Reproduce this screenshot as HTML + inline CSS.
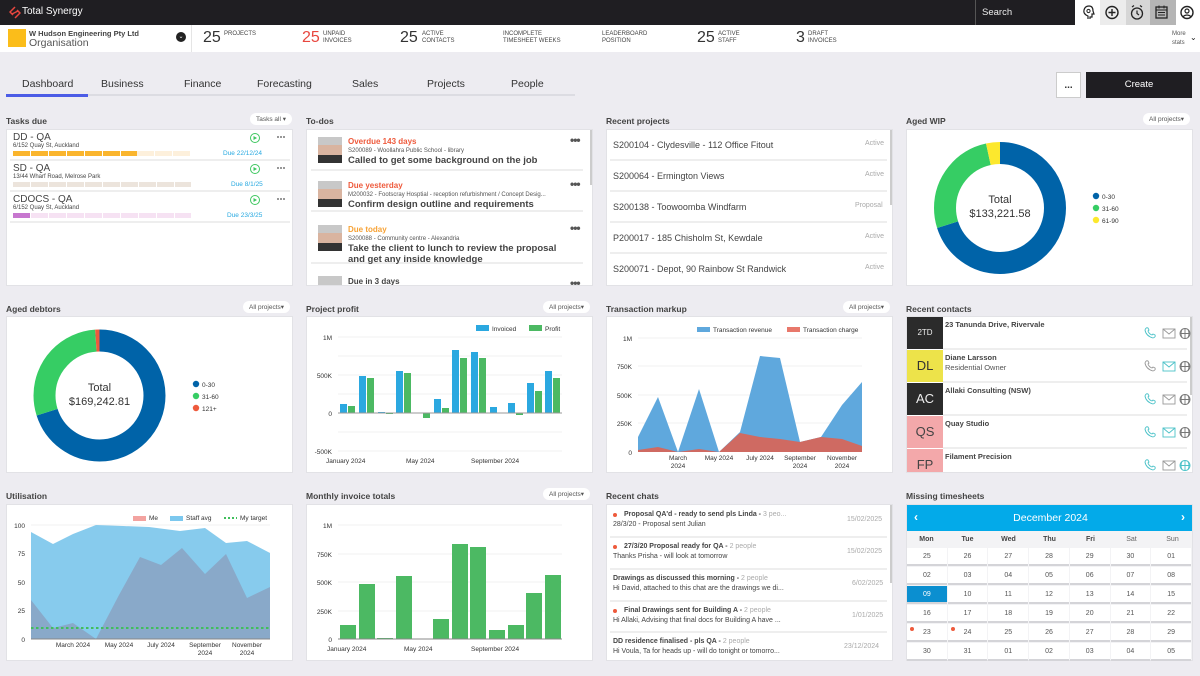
<!DOCTYPE html>
<html><head><meta charset="utf-8">
<style>
*{box-sizing:border-box;margin:0;padding:0}
body{width:1200px;height:676px;background:#edecf1;font-family:"Liberation Sans",sans-serif;color:#333;position:relative;overflow:hidden}
.a{position:absolute}
.top{left:0;top:0;width:1200px;height:25px;background:#1f1e22}
.stats{left:0;top:25px;width:1200px;height:27px;background:#fff}
.num{font-size:16px;color:#333;top:29px}
.lbl{font-size:6px;line-height:7px;color:#444;top:31px}
.tab{top:78px;font-size:10.5px;color:#333}
.card{background:#fff;border:1px solid #e2e2e6}
.ttl{font-size:8.5px;font-weight:bold;color:#444}
.pill{background:#fff;border-radius:8px;font-size:6.5px;color:#555;padding:2px 6px;height:12px}
.dots{font-size:12px;font-weight:bold;color:#555;letter-spacing:-1px}
.row{border-bottom:2px solid #eee}
svg text{font-family:"Liberation Sans",sans-serif}
.c{background:#fff;margin:0 1px 1px 0;border-bottom:2px solid #d4d4d8}
.dot{position:absolute;left:3px;top:3px;width:4px;height:4px;border-radius:2px;background:#ee5a3c}
</style></head><body>
<div class="a top"></div>
<svg class="a" style="left:9px;top:6px" width="12" height="13" viewBox="0 0 12 13"><path d="M6 1 L1 6 L4 9 M6 12 L11 7 L8 4 M3 8 L9 5" stroke="#e8473f" stroke-width="1.5" fill="none"/></svg>
<div class="a" style="left:22px;top:6px;color:#fff;font-size:10px">Total Synergy</div>
<div class="a" style="left:975px;top:0;width:1px;height:25px;background:#555"></div>
<div class="a" style="left:982px;top:7px;color:#eee;font-size:9.5px">Search</div>
<div class="a" style="left:1075px;top:0;width:25px;height:25px;background:#fff"></div>
<div class="a" style="left:1100px;top:0;width:26px;height:25px;background:#ececec"></div>
<div class="a" style="left:1126px;top:0;width:24px;height:25px;background:#d6d6d6"></div>
<div class="a" style="left:1150px;top:0;width:26px;height:25px;background:#b5b5b5"></div>
<div class="a" style="left:1176px;top:0;width:24px;height:25px;background:#fff"></div>
<svg class="a" style="left:1080px;top:4px" width="120" height="17" viewBox="0 0 120 17">
<path d="M8 15 V12 Q3 10 4 6 Q5 2 9 2 Q13 2 13 7 L14 10 H12 V13 H10 V15" fill="none" stroke="#222" stroke-width="1.2"/><circle cx="8.5" cy="7" r="1.6" fill="none" stroke="#222"/>
<circle cx="32" cy="8.5" r="6" fill="none" stroke="#222" stroke-width="1.4"/><path d="M32 5v7M28.5 8.5h7" stroke="#222" stroke-width="1.4"/>
<circle cx="57" cy="9.5" r="5.5" fill="none" stroke="#222" stroke-width="1.3"/><path d="M57 6.5v3l2 1.5M52 3l2-1.5M62 3l-2-1.5" stroke="#222" stroke-width="1.2" fill="none"/>
<rect x="76" y="3" width="11" height="11" fill="none" stroke="#222" stroke-width="1.3"/><path d="M76 6h11M79 1.5v3M84 1.5v3M78 8.5h7M78 11h7" stroke="#222"/>
<circle cx="107" cy="8.5" r="6" fill="none" stroke="#222" stroke-width="1.4"/><circle cx="107" cy="7" r="2" fill="none" stroke="#222" stroke-width="1.2"/><path d="M103 12.5q4-3 8 0" stroke="#222" fill="none" stroke-width="1.2"/>
</svg>
<div class="a stats"></div>
<div class="a" style="left:8px;top:29px;width:18px;height:18px;background:#fbbd1a"></div>
<div class="a" style="left:29px;top:29px;font-size:7.5px;font-weight:bold;color:#444">W Hudson Engineering Pty Ltd</div>
<div class="a" style="left:29px;top:37px;font-size:10.5px;color:#555">Organisation</div>
<div class="a" style="left:176px;top:32px;width:10px;height:10px;border-radius:5px;background:#222;color:#fff;font-size:6px;text-align:center;line-height:10px">⌄</div>
<div class="a" style="left:191px;top:25px;width:1px;height:27px;background:#e5e5e5"></div>
<div class="a num" style="left:203px">25</div><div class="a lbl" style="left:224px">PROJECTS</div>
<div class="a num" style="left:302px;color:#e8473f">25</div><div class="a lbl" style="left:323px">UNPAID<br>INVOICES</div>
<div class="a num" style="left:400px">25</div><div class="a lbl" style="left:422px">ACTIVE<br>CONTACTS</div>
<div class="a lbl" style="left:503px">INCOMPLETE<br>TIMESHEET WEEKS</div>
<div class="a lbl" style="left:602px">LEADERBOARD<br>POSITION</div>
<div class="a num" style="left:697px">25</div><div class="a lbl" style="left:718px">ACTIVE<br>STAFF</div>
<div class="a num" style="left:796px">3</div><div class="a lbl" style="left:808px">DRAFT<br>INVOICES</div>
<div class="a" style="left:1172px;top:30px;font-size:6px;line-height:9px;color:#555">More<br>stats</div>
<div class="a" style="left:1190px;top:33px;font-size:8px;color:#222">⌄</div>
<div class="a tab" style="left:22px">Dashboard</div>
<div class="a tab" style="left:101px">Business</div>
<div class="a tab" style="left:184px">Finance</div>
<div class="a tab" style="left:257px">Forecasting</div>
<div class="a tab" style="left:352px">Sales</div>
<div class="a tab" style="left:427px">Projects</div>
<div class="a tab" style="left:511px">People</div>
<div class="a" style="left:6px;top:94px;width:569px;height:2px;background:#dcdce2"></div>
<div class="a" style="left:6px;top:94px;width:82px;height:3px;background:#4c5ce6"></div>
<div class="a" style="left:1056px;top:72px;width:25px;height:26px;background:#fff;border:1px solid #ccc;font-size:10px;font-weight:bold;text-align:center;line-height:26px">...</div>
<div class="a" style="left:1086px;top:72px;width:106px;height:26px;background:#1f1e22;color:#fff;font-size:9.5px;text-align:center;line-height:26px">Create</div>

<div class="a ttl" style="left:6px;top:116px">Tasks due</div>
<div class="a pill" style="left:250px;top:113px">Tasks all ▾</div>
<div class="a ttl" style="left:306px;top:116px">To-dos</div>
<div class="a ttl" style="left:606px;top:116px">Recent projects</div>
<div class="a ttl" style="left:906px;top:116px">Aged WIP</div>
<div class="a pill" style="left:1143px;top:113px">All projects▾</div>

<div class="a card" style="left:6px;top:129px;width:287px;height:157px"></div>
<div class="a" style="left:10px;top:131px;width:280px;height:150px">
 <div class="a row" style="left:0;top:0;width:280px;height:30px"></div>
 <div class="a row" style="left:0;top:31px;width:280px;height:30px"></div>
 <div class="a row" style="left:0;top:62px;width:280px;height:30px"></div>
</div>
<div class="a" style="left:13px;top:132px;font-size:10px;color:#444">DD - QA</div>
<div class="a" style="left:13px;top:143px;font-size:6px;color:#444">6/152 Quay St, Auckland</div>
<div class="a" style="left:13px;top:151px;width:178px;height:5px;background:repeating-linear-gradient(90deg,#fab52d 0 17px,#fff 17px 18px)"></div>
<div class="a" style="left:137px;top:151px;width:54px;height:5px;background:repeating-linear-gradient(90deg,#fdf0dc 0 17px,#fff 17px 18px)"></div>
<div class="a" style="left:223px;top:150px;font-size:6.5px;color:#27a9e1">Due 22/12/24</div>
<div class="a" style="left:13px;top:163px;font-size:10px;color:#444">SD - QA</div>
<div class="a" style="left:13px;top:174px;font-size:6px;color:#444">13/44 Wharf Road, Melrose Park</div>
<div class="a" style="left:13px;top:182px;width:178px;height:5px;background:repeating-linear-gradient(90deg,#ece4dc 0 17px,#fff 17px 18px)"></div>
<div class="a" style="left:231px;top:181px;font-size:6.5px;color:#27a9e1">Due 8/1/25</div>
<div class="a" style="left:13px;top:194px;font-size:10px;color:#444">CDOCS - QA</div>
<div class="a" style="left:13px;top:205px;font-size:6px;color:#444">6/152 Quay St, Auckland</div>
<div class="a" style="left:13px;top:213px;width:178px;height:5px;background:repeating-linear-gradient(90deg,#f6e2f3 0 17px,#fff 17px 18px)"></div>
<div class="a" style="left:13px;top:213px;width:17px;height:5px;background:#c777cf"></div>
<div class="a" style="left:227px;top:212px;font-size:6.5px;color:#27a9e1">Due 23/3/25</div>
<svg class="a" style="left:248px;top:132px" width="40" height="90" viewBox="0 0 40 90">
<g fill="none" stroke="#3fc760" stroke-width="1"><circle cx="7" cy="6" r="4.5"/><circle cx="7" cy="37" r="4.5"/><circle cx="7" cy="68" r="4.5"/></g>
<g fill="#3fc760"><path d="M5.5 4v4l3.5-2z"/><path d="M5.5 35v4l3.5-2z"/><path d="M5.5 66v4l3.5-2z"/></g>
<g fill="#777"><circle cx="30" cy="5" r="1"/><circle cx="33" cy="5" r="1"/><circle cx="36" cy="5" r="1"/><circle cx="30" cy="36" r="1"/><circle cx="33" cy="36" r="1"/><circle cx="36" cy="36" r="1"/><circle cx="30" cy="67" r="1"/><circle cx="33" cy="67" r="1"/><circle cx="36" cy="67" r="1"/></g>
</svg>

<div class="a card" style="left:306px;top:129px;width:287px;height:157px;overflow:hidden">
 <div class="a" style="left:4px;top:2px;width:272px;height:39px;border-bottom:2px solid #eee"></div>
 <div class="a" style="left:4px;top:43px;width:272px;height:39px;border-bottom:2px solid #eee"></div>
 <div class="a" style="left:4px;top:84px;width:272px;height:50px;border-bottom:2px solid #eee"></div>
 <div class="a" style="left:283px;top:0;width:3px;height:55px;background:#ccc"></div>
 <div class="a" style="left:11px;top:7px;width:24px;height:26px;background:linear-gradient(180deg,#c8c8c8 0 30%,#d9b4a0 30% 70%,#333 70%)"></div>
 <div class="a" style="left:11px;top:51px;width:24px;height:26px;background:linear-gradient(180deg,#c8c8c8 0 30%,#d9b4a0 30% 70%,#333 70%)"></div>
 <div class="a" style="left:11px;top:95px;width:24px;height:26px;background:linear-gradient(180deg,#c8c8c8 0 30%,#d9b4a0 30% 70%,#333 70%)"></div>
 <div class="a" style="left:11px;top:146px;width:24px;height:12px;background:#c8c8c8"></div>
 <div class="a" style="left:41px;top:7px;font-size:8px;font-weight:bold;color:#ee5a3c">Overdue 143 days</div>
 <div class="a" style="left:41px;top:18px;font-size:6px;color:#555">S200089 - Woollahra Public School - library</div>
 <div class="a" style="left:41px;top:25px;font-size:9.5px;font-weight:bold;color:#444">Called to get some background on the job</div>
 <div class="a" style="left:41px;top:51px;font-size:8px;font-weight:bold;color:#ee5a3c">Due yesterday</div>
 <div class="a" style="left:41px;top:62px;font-size:6px;color:#555">M200032 - Footscray Hosptial - reception refurbishment / Concept Desig...</div>
 <div class="a" style="left:41px;top:69px;font-size:9.5px;font-weight:bold;color:#444">Confirm design outline and requirements</div>
 <div class="a" style="left:41px;top:95px;font-size:8px;font-weight:bold;color:#f7a235">Due today</div>
 <div class="a" style="left:41px;top:106px;font-size:6px;color:#555">S200088 - Community centre - Alexandria</div>
 <div class="a" style="left:41px;top:113px;font-size:9.5px;font-weight:bold;color:#444;line-height:11px">Take the client to lunch to review the proposal<br>and get any inside knowledge</div>
 <div class="a" style="left:41px;top:147px;font-size:8px;font-weight:bold;color:#444">Due in 3 days</div>
 <div class="a dots" style="left:263px;top:3px">•••</div>
 <div class="a dots" style="left:263px;top:47px">•••</div>
 <div class="a dots" style="left:263px;top:91px">•••</div>
 <div class="a dots" style="left:263px;top:146px">•••</div>
</div>

<div class="a card" style="left:606px;top:129px;width:287px;height:157px;overflow:hidden">
 <div class="a" style="left:3px;top:0;width:277px;height:31px;border-bottom:2px solid #eee"></div>
 <div class="a" style="left:3px;top:31px;width:277px;height:31px;border-bottom:2px solid #eee"></div>
 <div class="a" style="left:3px;top:62px;width:277px;height:31px;border-bottom:2px solid #eee"></div>
 <div class="a" style="left:3px;top:93px;width:277px;height:31px;border-bottom:2px solid #eee"></div>
 <div class="a" style="left:283px;top:0;width:3px;height:75px;background:#ccc"></div>
 <div class="a" style="left:6px;top:10px;font-size:9px;color:#444">S200104 - Clydesville - 112 Office Fitout</div>
 <div class="a" style="left:6px;top:41px;font-size:9px;color:#444">S200064 - Ermington Views</div>
 <div class="a" style="left:6px;top:72px;font-size:9px;color:#444">S200138 - Toowoomba Windfarm</div>
 <div class="a" style="left:6px;top:103px;font-size:9px;color:#444">P200017 - 185 Chisholm St, Kewdale</div>
 <div class="a" style="left:6px;top:134px;font-size:9px;color:#444">S200071 - Depot, 90 Rainbow St Randwick</div>
 <div class="a" style="left:258px;top:10px;font-size:7px;color:#aaa">Active</div>
 <div class="a" style="left:258px;top:41px;font-size:7px;color:#aaa">Active</div>
 <div class="a" style="left:248px;top:72px;font-size:7px;color:#aaa">Proposal</div>
 <div class="a" style="left:258px;top:103px;font-size:7px;color:#aaa">Active</div>
 <div class="a" style="left:258px;top:134px;font-size:7px;color:#aaa">Active</div>
</div>

<div class="a card" style="left:906px;top:129px;width:287px;height:157px"></div>
<svg class="a" style="left:906px;top:129px" width="287" height="157">
<g transform="rotate(-90 94 79)">
<circle cx="94" cy="79" r="55" fill="none" stroke="#0063a8" stroke-width="22" stroke-dasharray="242 104" />
<circle cx="94" cy="79" r="55" fill="none" stroke="#36cd64" stroke-width="22" stroke-dasharray="0 242 91.5 100" />
<circle cx="94" cy="79" r="55" fill="none" stroke="#fce82d" stroke-width="22" stroke-dasharray="0 333.5 12 10" />
</g>
<text x="94" y="74" font-size="11" text-anchor="middle" fill="#333">Total</text>
<text x="94" y="88" font-size="11" text-anchor="middle" fill="#333">$133,221.58</text>
<circle cx="190" cy="67" r="3.2" fill="#0063a8"/><text x="196" y="70" font-size="6.5" fill="#333">0-30</text>
<circle cx="190" cy="79" r="3.2" fill="#36cd64"/><text x="196" y="82" font-size="6.5" fill="#333">31-60</text>
<circle cx="190" cy="91" r="3.2" fill="#fce82d"/><text x="196" y="94" font-size="6.5" fill="#333">61-90</text>
</svg>

<div class="a ttl" style="left:6px;top:304px">Aged debtors</div>
<div class="a pill" style="left:243px;top:301px">All projects▾</div>
<div class="a ttl" style="left:306px;top:304px">Project profit</div>
<div class="a pill" style="left:543px;top:301px">All projects▾</div>
<div class="a ttl" style="left:606px;top:304px">Transaction markup</div>
<div class="a pill" style="left:843px;top:301px">All projects▾</div>
<div class="a ttl" style="left:906px;top:304px">Recent contacts</div>

<div class="a card" style="left:6px;top:316px;width:287px;height:157px"></div>
<svg class="a" style="left:6px;top:316px" width="287" height="157">
<g transform="rotate(-90 93.5 79.5)">
<circle cx="93.5" cy="79.5" r="55" fill="none" stroke="#0063a8" stroke-width="22" stroke-dasharray="242 104"/>
<circle cx="93.5" cy="79.5" r="55" fill="none" stroke="#36cd64" stroke-width="22" stroke-dasharray="0 242 99.5 10"/>
<circle cx="93.5" cy="79.5" r="55" fill="none" stroke="#ee5a3c" stroke-width="22" stroke-dasharray="0 341.5 4 10"/>
</g>
<text x="93.5" y="75" font-size="11" text-anchor="middle" fill="#333">Total</text>
<text x="93.5" y="89" font-size="11" text-anchor="middle" fill="#333">$169,242.81</text>
<circle cx="190" cy="68" r="3.2" fill="#0063a8"/><text x="196" y="71" font-size="6.5" fill="#333">0-30</text>
<circle cx="190" cy="80" r="3.2" fill="#36cd64"/><text x="196" y="83" font-size="6.5" fill="#333">31-60</text>
<circle cx="190" cy="92" r="3.2" fill="#ee5a3c"/><text x="196" y="95" font-size="6.5" fill="#333">121+</text>
</svg>

<div class="a card" style="left:306px;top:316px;width:287px;height:157px"></div>
<div class="a card" style="left:606px;top:316px;width:287px;height:157px"></div>
<svg class="a" style="left:0;top:0" width="1200" height="676">
<g font-size="6.5" fill="#333">
<rect x="476" y="325" width="13" height="6" fill="#2ba8e0"/><text x="492" y="331">Invoiced</text>
<rect x="529" y="325" width="13" height="6" fill="#4cb963"/><text x="545" y="331">Profit</text>
<g stroke="#f0f0f0"><line x1="338" y1="337" x2="562" y2="337"/><line x1="338" y1="356" x2="562" y2="356"/><line x1="338" y1="375" x2="562" y2="375"/><line x1="338" y1="394" x2="562" y2="394"/><line x1="338" y1="432" x2="562" y2="432"/><line x1="338" y1="451" x2="562" y2="451"/></g>
<text x="332" y="340" text-anchor="end">1M</text><text x="332" y="378" text-anchor="end">500K</text><text x="332" y="416" text-anchor="end">0</text><text x="332" y="454" text-anchor="end">-500K</text>
<g fill="#2ba8e0">
<rect x="340" y="404" width="7" height="9"/><rect x="359" y="376" width="7" height="37"/><rect x="378" y="412" width="7" height="1"/><rect x="396" y="371" width="7" height="42"/><rect x="434" y="399" width="7" height="14"/><rect x="452" y="350" width="7" height="63"/><rect x="471" y="352" width="7" height="61"/><rect x="490" y="407" width="7" height="6"/><rect x="508" y="403" width="7" height="10"/><rect x="527" y="383" width="7" height="30"/><rect x="545" y="371" width="7" height="42"/>
</g>
<g fill="#4cb963">
<rect x="348" y="406" width="7" height="7"/><rect x="367" y="378" width="7" height="35"/><rect x="386" y="413" width="7" height="1"/><rect x="404" y="373" width="7" height="40"/><rect x="423" y="413" width="7" height="5"/><rect x="442" y="408" width="7" height="5"/><rect x="460" y="358" width="7" height="55"/><rect x="479" y="358" width="7" height="55"/><rect x="516" y="413" width="7" height="2"/><rect x="535" y="391" width="7" height="22"/><rect x="553" y="378" width="7" height="35"/>
</g>
<line x1="338" y1="413" x2="562" y2="413" stroke="#999"/>
<text x="326" y="463">January 2024</text><text x="406" y="463">May 2024</text><text x="471" y="463">September 2024</text>
</g>
<g font-size="6.5" fill="#333">
<rect x="697" y="327" width="13" height="5" fill="#5fa8dd"/><text x="713" y="332">Transaction revenue</text>
<rect x="787" y="327" width="13" height="5" fill="#e8786b"/><text x="803" y="332">Transaction charge</text>
<g stroke="#f0f0f0"><line x1="638" y1="338" x2="862" y2="338"/><line x1="638" y1="366" x2="862" y2="366"/><line x1="638" y1="395" x2="862" y2="395"/><line x1="638" y1="423" x2="862" y2="423"/></g>
<text x="632" y="341" text-anchor="end">1M</text><text x="632" y="369" text-anchor="end">750K</text><text x="632" y="398" text-anchor="end">500K</text><text x="632" y="426" text-anchor="end">250K</text><text x="632" y="455" text-anchor="end">0</text>
<path d="M638 437 L658 397 L678 452 L699 389 L719 452 L740 432 L760 356 L780 358 L800 442 L821 437 L842 405 L862 382 L862 452 L638 452Z" fill="#5fa8dd"/>
<path d="M638 450 L658 447 L678 452 L699 449 L719 452 L740 433 L760 437 L780 439 L800 442 L821 437 L842 439 L862 446 L862 452 L638 452Z" fill="#cf6a62"/>
<text x="678" y="460" text-anchor="middle">March</text><text x="678" y="468" text-anchor="middle">2024</text>
<text x="719" y="460" text-anchor="middle">May 2024</text>
<text x="760" y="460" text-anchor="middle">July 2024</text>
<text x="800" y="460" text-anchor="middle">September</text><text x="800" y="468" text-anchor="middle">2024</text>
<text x="842" y="460" text-anchor="middle">November</text><text x="842" y="468" text-anchor="middle">2024</text>
</g>
</svg>

<div class="a card" style="left:906px;top:316px;width:287px;height:157px;overflow:hidden">
 <div class="a" style="left:0;top:0;width:36px;height:32px;background:#2b2b2b;color:#eee;font-size:8px;text-align:center;line-height:32px">2TD</div>
 <div class="a" style="left:0;top:33px;width:36px;height:32px;background:#ede34a;color:#333;font-size:13px;text-align:center;line-height:32px">DL</div>
 <div class="a" style="left:0;top:66px;width:36px;height:32px;background:#2b2b2b;color:#eee;font-size:13px;text-align:center;line-height:32px">AC</div>
 <div class="a" style="left:0;top:99px;width:36px;height:32px;background:#f3a8aa;color:#444;font-size:13px;text-align:center;line-height:32px">QS</div>
 <div class="a" style="left:0;top:132px;width:36px;height:32px;background:#f3a8aa;color:#444;font-size:13px;text-align:center;line-height:32px">FP</div>
 <div class="a" style="left:36px;top:31px;width:244px;height:2px;background:#eee"></div>
 <div class="a" style="left:36px;top:64px;width:244px;height:2px;background:#eee"></div>
 <div class="a" style="left:36px;top:97px;width:244px;height:2px;background:#eee"></div>
 <div class="a" style="left:36px;top:130px;width:244px;height:2px;background:#eee"></div>
 <div class="a" style="left:283px;top:0;width:3px;height:78px;background:#ccc"></div>
 <div class="a" style="left:38px;top:3px;font-size:7.5px;font-weight:bold;color:#444">23 Tanunda Drive, Rivervale</div>
 <div class="a" style="left:38px;top:36px;font-size:7.5px;font-weight:bold;color:#444">Diane Larsson</div>
 <div class="a" style="left:38px;top:46px;font-size:7.5px;color:#555">Residential Owner</div>
 <div class="a" style="left:38px;top:69px;font-size:7.5px;font-weight:bold;color:#444">Allaki Consulting (NSW)</div>
 <div class="a" style="left:38px;top:102px;font-size:7.5px;font-weight:bold;color:#444">Quay Studio</div>
 <div class="a" style="left:38px;top:135px;font-size:7.5px;font-weight:bold;color:#444">Filament Precision</div>
 <svg class="a" style="left:235px;top:0" width="50" height="160">
  <g fill="none" stroke-width="0.9">
   <path stroke="#4cc2c8" d="M3 13q1-3 3-2l1 2-1 1q1 3 4 4l1-1 2 1q1 2-2 3q-7-2-8-8z"/>
   <path stroke="#999" d="M3 46q1-3 3-2l1 2-1 1q1 3 4 4l1-1 2 1q1 2-2 3q-7-2-8-8z"/>
   <path stroke="#4cc2c8" d="M3 79q1-3 3-2l1 2-1 1q1 3 4 4l1-1 2 1q1 2-2 3q-7-2-8-8z"/>
   <path stroke="#4cc2c8" d="M3 112q1-3 3-2l1 2-1 1q1 3 4 4l1-1 2 1q1 2-2 3q-7-2-8-8z"/>
   <path stroke="#4cc2c8" d="M3 145q1-3 3-2l1 2-1 1q1 3 4 4l1-1 2 1q1 2-2 3q-7-2-8-8z"/>
   <g stroke="#999"><rect x="21" y="12" width="12" height="9"/><path d="M21 12l6 5 6-5"/></g>
   <g stroke="#4cc2c8"><rect x="21" y="45" width="12" height="9"/><path d="M21 45l6 5 6-5"/></g>
   <g stroke="#999"><rect x="21" y="78" width="12" height="9"/><path d="M21 78l6 5 6-5"/></g>
   <g stroke="#4cc2c8"><rect x="21" y="111" width="12" height="9"/><path d="M21 111l6 5 6-5"/></g>
   <g stroke="#999"><rect x="21" y="144" width="12" height="9"/><path d="M21 144l6 5 6-5"/></g>
   <g stroke="#777"><circle cx="43" cy="16.5" r="5"/><path d="M38 16.5h10M43 11.5v10M40 12.5q-2 4 0 8M46 12.5q2 4 0 8"/></g>
   <g stroke="#777"><circle cx="43" cy="49.5" r="5"/><path d="M38 49.5h10M43 44.5v10M40 45.5q-2 4 0 8M46 45.5q2 4 0 8"/></g>
   <g stroke="#777"><circle cx="43" cy="82.5" r="5"/><path d="M38 82.5h10M43 77.5v10M40 78.5q-2 4 0 8M46 78.5q2 4 0 8"/></g>
   <g stroke="#777"><circle cx="43" cy="115.5" r="5"/><path d="M38 115.5h10M43 110.5v10M40 111.5q-2 4 0 8M46 111.5q2 4 0 8"/></g>
   <g stroke="#4cc2c8"><circle cx="43" cy="148.5" r="5"/><path d="M38 148.5h10M43 143.5v10M40 144.5q-2 4 0 8M46 144.5q2 4 0 8"/></g>
  </g>
 </svg>
</div>

<div class="a ttl" style="left:6px;top:491px">Utilisation</div>
<div class="a ttl" style="left:306px;top:491px">Monthly invoice totals</div>
<div class="a pill" style="left:543px;top:488px">All projects▾</div>
<div class="a ttl" style="left:606px;top:491px">Recent chats</div>
<div class="a ttl" style="left:906px;top:491px">Missing timesheets</div>

<div class="a card" style="left:6px;top:504px;width:287px;height:157px"></div>
<div class="a card" style="left:306px;top:504px;width:287px;height:157px"></div>
<svg class="a" style="left:0;top:0" width="1200" height="676">
<g font-size="6.5" fill="#333">
<rect x="133" y="516" width="13" height="5" fill="#f3a3a0"/><text x="149" y="520">Me</text>
<rect x="170" y="516" width="13" height="5" fill="#7cc8ee"/><text x="186" y="520">Staff avg</text>
<line x1="224" y1="518" x2="237" y2="518" stroke="#3fbf5b" stroke-width="2" stroke-dasharray="2 2"/><text x="240" y="520">My target</text>
<g stroke="#f0f0f0"><line x1="31" y1="525" x2="270" y2="525"/><line x1="31" y1="553" x2="270" y2="553"/><line x1="31" y1="582" x2="270" y2="582"/><line x1="31" y1="610" x2="270" y2="610"/></g>
<text x="25" y="528" text-anchor="end">100</text><text x="25" y="556" text-anchor="end">75</text><text x="25" y="585" text-anchor="end">50</text><text x="25" y="613" text-anchor="end">25</text><text x="25" y="642" text-anchor="end">0</text>
<path d="M31 532 L53 544 L73 534 L96 525 L123 526 L149 527 L180 531 L205 528 L226 543 L247 541 L270 553 L270 639 L31 639Z" fill="#87cbed"/>
<path d="M31 600 L53 628 L73 623 L96 639 L119 595 L140 557 L161 565 L182 548 L205 574 L226 554 L247 598 L270 587 L270 639 L31 639Z" fill="#89a9c9"/>
<line x1="31" y1="628" x2="270" y2="628" stroke="#3fbf5b" stroke-width="2" stroke-dasharray="2.5 2.5"/>
<line x1="31" y1="639" x2="270" y2="639" stroke="#888"/>
<text x="73" y="647" text-anchor="middle">March 2024</text><text x="119" y="647" text-anchor="middle">May 2024</text><text x="161" y="647" text-anchor="middle">July 2024</text>
<text x="205" y="647" text-anchor="middle">September</text><text x="205" y="655" text-anchor="middle">2024</text>
<text x="247" y="647" text-anchor="middle">November</text><text x="247" y="655" text-anchor="middle">2024</text>
<g stroke="#f0f0f0"><line x1="338" y1="525" x2="562" y2="525"/><line x1="338" y1="554" x2="562" y2="554"/><line x1="338" y1="582" x2="562" y2="582"/><line x1="338" y1="611" x2="562" y2="611"/></g>
<text x="332" y="528" text-anchor="end">1M</text><text x="332" y="557" text-anchor="end">750K</text><text x="332" y="585" text-anchor="end">500K</text><text x="332" y="614" text-anchor="end">250K</text><text x="332" y="642" text-anchor="end">0</text>
<g fill="#4cb963">
<rect x="340" y="625" width="16" height="14"/><rect x="359" y="584" width="16" height="55"/><rect x="377" y="638" width="16" height="1"/><rect x="396" y="576" width="16" height="63"/><rect x="433" y="619" width="16" height="20"/><rect x="452" y="544" width="16" height="95"/><rect x="470" y="547" width="16" height="92"/><rect x="489" y="630" width="16" height="9"/><rect x="508" y="625" width="16" height="14"/><rect x="526" y="593" width="16" height="46"/><rect x="545" y="575" width="16" height="64"/>
</g>
<line x1="338" y1="639" x2="562" y2="639" stroke="#888"/>
<text x="327" y="651">January 2024</text><text x="404" y="651">May 2024</text><text x="471" y="651">September 2024</text>
</g>
</svg>

<div class="a card" style="left:606px;top:504px;width:287px;height:157px;overflow:hidden">
 <div class="a" style="left:3px;top:31px;width:277px;height:2px;background:#eee"></div>
 <div class="a" style="left:3px;top:63px;width:277px;height:2px;background:#eee"></div>
 <div class="a" style="left:3px;top:95px;width:277px;height:2px;background:#eee"></div>
 <div class="a" style="left:3px;top:126px;width:277px;height:2px;background:#eee"></div>
 <div class="a" style="left:283px;top:0;width:3px;height:78px;background:#ccc"></div>
 <div class="a" style="left:6px;top:8px;width:4px;height:4px;border-radius:2px;background:#ee5a3c"></div>
 <div class="a" style="left:6px;top:40px;width:4px;height:4px;border-radius:2px;background:#ee5a3c"></div>
 <div class="a" style="left:6px;top:104px;width:4px;height:4px;border-radius:2px;background:#ee5a3c"></div>
 <div class="a" style="left:17px;top:6px;font-size:7px;color:#444"><b>Proposal QA'd - ready to send pls Linda - </b><span style="color:#aaa">3 peo...</span></div>
 <div class="a" style="left:6px;top:16px;font-size:7px;color:#444">28/3/20 - Proposal sent Julian</div>
 <div class="a" style="left:17px;top:38px;font-size:7px;color:#444"><b>27/3/20 Proposal ready for QA - </b><span style="color:#aaa">2 people</span></div>
 <div class="a" style="left:6px;top:48px;font-size:7px;color:#444">Thanks Prisha - will look at tomorrow</div>
 <div class="a" style="left:6px;top:70px;font-size:7px;color:#444"><b>Drawings as discussed this morning - </b><span style="color:#aaa">2 people</span></div>
 <div class="a" style="left:6px;top:80px;font-size:7px;color:#444">Hi David, attached to this chat are the drawings we di...</div>
 <div class="a" style="left:17px;top:102px;font-size:7px;color:#444"><b>Final Drawings sent for Building A - </b><span style="color:#aaa">2 people</span></div>
 <div class="a" style="left:6px;top:112px;font-size:7px;color:#444">Hi Allaki, Advising that final docs for Building A have ...</div>
 <div class="a" style="left:6px;top:133px;font-size:7px;color:#444"><b>DD residence finalised - pls QA - </b><span style="color:#aaa">2 people</span></div>
 <div class="a" style="left:6px;top:143px;font-size:7px;color:#444">Hi Voula, Ta for heads up - will do tonight or tomorro...</div>
 <div class="a" style="left:240px;top:11px;font-size:7px;color:#aaa">15/02/2025</div>
 <div class="a" style="left:240px;top:43px;font-size:7px;color:#aaa">15/02/2025</div>
 <div class="a" style="left:245px;top:75px;font-size:7px;color:#aaa">6/02/2025</div>
 <div class="a" style="left:245px;top:107px;font-size:7px;color:#aaa">1/01/2025</div>
 <div class="a" style="left:237px;top:138px;font-size:7px;color:#aaa">23/12/2024</div>
</div>

<div class="a card" style="left:906px;top:504px;width:287px;height:157px;overflow:hidden;background:#f3f3f5">
 <div class="a" style="left:0;top:0;width:287px;height:26px;background:#03aae9;color:#fff;font-size:10.5px;text-align:center;line-height:26px">December 2024</div>
 <div class="a" style="left:7px;top:5px;color:#fff;font-size:12px;font-weight:bold">‹</div>
 <div class="a" style="left:274px;top:5px;color:#fff;font-size:12px;font-weight:bold">›</div>
</div>
<div class="a" style="left:906px;top:530px;width:287px;font-size:7px;color:#444;display:grid;grid-template-columns:repeat(7,1fr);text-align:center;line-height:19px;font-weight:bold">
 <span>Mon</span><span>Tue</span><span>Wed</span><span>Thu</span><span>Fri</span><span style="font-weight:normal;color:#666">Sat</span><span style="font-weight:normal;color:#666">Sun</span>
</div>
<div class="a" style="left:907px;top:548px;width:285px;display:grid;grid-template-columns:repeat(7,1fr);grid-auto-rows:19px;gap:0;font-size:7px;color:#555;text-align:center;line-height:17px">
<span class="c">25</span><span class="c">26</span><span class="c">27</span><span class="c">28</span><span class="c">29</span><span class="c">30</span><span class="c">01</span>
<span class="c">02</span><span class="c">03</span><span class="c">04</span><span class="c">05</span><span class="c">06</span><span class="c">07</span><span class="c">08</span>
<span class="c" style="background:#0b8fd0;color:#fff">09</span><span class="c">10</span><span class="c">11</span><span class="c">12</span><span class="c">13</span><span class="c">14</span><span class="c">15</span>
<span class="c">16</span><span class="c">17</span><span class="c">18</span><span class="c">19</span><span class="c">20</span><span class="c">21</span><span class="c">22</span>
<span class="c" style="position:relative">23<i class="dot"></i></span><span class="c" style="position:relative">24<i class="dot"></i></span><span class="c">25</span><span class="c">26</span><span class="c">27</span><span class="c">28</span><span class="c">29</span>
<span class="c">30</span><span class="c">31</span><span class="c">01</span><span class="c">02</span><span class="c">03</span><span class="c">04</span><span class="c">05</span>
</div>
</body></html>
